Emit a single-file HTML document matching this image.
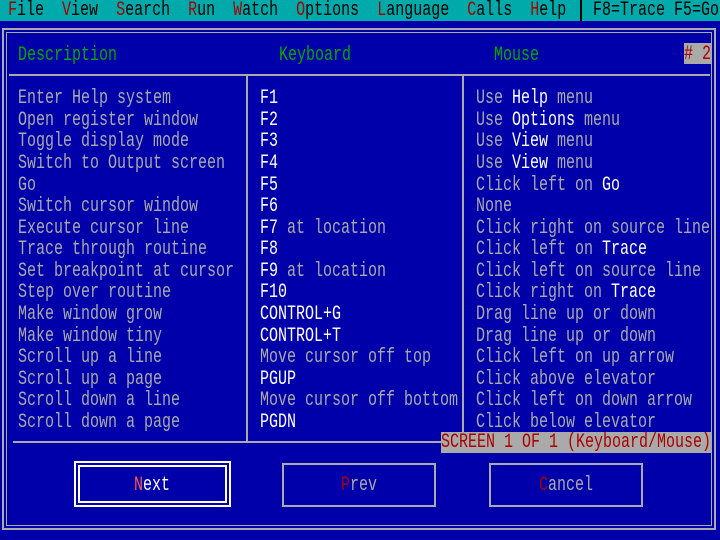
<!DOCTYPE html>
<html><head><meta charset="utf-8"><style>
body{margin:0;width:720px;height:540px;background:#0000aa;overflow:hidden;position:relative;font-family:"Liberation Mono",monospace;font-size:15px;}
.t{position:absolute;height:22px;line-height:22px;white-space:pre;color:#aaa;transform:translateY(2px) scaleY(1.35);transform-origin:50% 50%;}
.k.t{transform:translateY(0) scaleY(1.35);}
.w{color:#fff}.g{color:#00aa00}.r{color:#aa0000}.br{color:#ff5555}.k{color:#000}
.box{position:absolute;box-sizing:border-box}
</style></head><body>
<div class="box" style="left:0;top:0;width:720px;height:21px;background:#00aaaa"></div>
<div class="box" style="left:580px;top:0;width:2px;height:21px;background:#000"></div>
<div class="t k" style="left:8px;top:0"><span class="r">F</span>ile  <span class="r">V</span>iew  <span class="r">S</span>earch  <span class="r">R</span>un  <span class="r">W</span>atch  <span class="r">O</span>ptions  <span class="r">L</span>anguage  <span class="r">C</span>alls  <span class="r">H</span>elp</div>
<div class="t k" style="left:593px;top:0">F8=Trace F5=Go</div>

<div class="box" style="left:2px;top:28px;width:714px;height:502px;border:2px solid #aaa"></div>
<div class="box" style="left:6px;top:32px;width:706px;height:494px;border:1px solid #aaa"></div>
<div class="box" style="left:9px;top:74px;width:701px;height:2px;background:#aaa"></div>
<div class="box" style="left:13px;top:441px;width:430px;height:2px;background:#aaa"></div>
<div class="box" style="left:246px;top:75px;width:2px;height:367px;background:#aaa"></div>
<div class="box" style="left:462px;top:75px;width:2px;height:367px;background:#aaa"></div>

<div class="t g" style="left:18px;top:43px">Description</div>
<div class="t g" style="left:279px;top:43px">Keyboard</div>
<div class="t g" style="left:494px;top:43px">Mouse</div>
<div class="box" style="left:684px;top:43px;width:27px;height:21px;background:#aaa"></div>
<div class="t r" style="left:684px;top:42px"># 2</div>

<div class="t" style="left:18px;top:86px">Enter Help system</div>
<div class="t" style="left:18px;top:108px">Open register window</div>
<div class="t" style="left:18px;top:129px">Toggle display mode</div>
<div class="t" style="left:18px;top:151px">Switch to Output screen</div>
<div class="t" style="left:18px;top:173px">Go</div>
<div class="t" style="left:18px;top:194px">Switch cursor window</div>
<div class="t" style="left:18px;top:216px">Execute cursor line</div>
<div class="t" style="left:18px;top:237px">Trace through routine</div>
<div class="t" style="left:18px;top:259px">Set breakpoint at cursor</div>
<div class="t" style="left:18px;top:280px">Step over routine</div>
<div class="t" style="left:18px;top:302px">Make window grow</div>
<div class="t" style="left:18px;top:324px">Make window tiny</div>
<div class="t" style="left:18px;top:345px">Scroll up a line</div>
<div class="t" style="left:18px;top:367px">Scroll up a page</div>
<div class="t" style="left:18px;top:388px">Scroll down a line</div>
<div class="t" style="left:18px;top:410px">Scroll down a page</div>

<div class="t w" style="left:260px;top:86px">F1</div>
<div class="t w" style="left:260px;top:108px">F2</div>
<div class="t w" style="left:260px;top:129px">F3</div>
<div class="t w" style="left:260px;top:151px">F4</div>
<div class="t w" style="left:260px;top:173px">F5</div>
<div class="t w" style="left:260px;top:194px">F6</div>
<div class="t" style="left:260px;top:216px"><span class="w">F7</span> at location</div>
<div class="t w" style="left:260px;top:237px">F8</div>
<div class="t" style="left:260px;top:259px"><span class="w">F9</span> at location</div>
<div class="t w" style="left:260px;top:280px">F10</div>
<div class="t w" style="left:260px;top:302px">CONTROL+G</div>
<div class="t w" style="left:260px;top:324px">CONTROL+T</div>
<div class="t" style="left:260px;top:345px">Move cursor off top</div>
<div class="t w" style="left:260px;top:367px">PGUP</div>
<div class="t" style="left:260px;top:388px">Move cursor off bottom</div>
<div class="t w" style="left:260px;top:410px">PGDN</div>

<div class="t" style="left:476px;top:86px">Use <span class="w">Help</span> menu</div>
<div class="t" style="left:476px;top:108px">Use <span class="w">Options</span> menu</div>
<div class="t" style="left:476px;top:129px">Use <span class="w">View</span> menu</div>
<div class="t" style="left:476px;top:151px">Use <span class="w">View</span> menu</div>
<div class="t" style="left:476px;top:173px">Click left on <span class="w">Go</span></div>
<div class="t" style="left:476px;top:194px">None</div>
<div class="t" style="left:476px;top:216px">Click right on source line</div>
<div class="t" style="left:476px;top:237px">Click left on <span class="w">Trace</span></div>
<div class="t" style="left:476px;top:259px">Click left on source line</div>
<div class="t" style="left:476px;top:280px">Click right on <span class="w">Trace</span></div>
<div class="t" style="left:476px;top:302px">Drag line up or down</div>
<div class="t" style="left:476px;top:324px">Drag line up or down</div>
<div class="t" style="left:476px;top:345px">Click left on up arrow</div>
<div class="t" style="left:476px;top:367px">Click above elevator</div>
<div class="t" style="left:476px;top:388px">Click left on down arrow</div>
<div class="t" style="left:476px;top:410px">Click below elevator</div>

<div class="box" style="left:441px;top:432px;width:270px;height:21px;background:#aaa"></div>
<div class="t r" style="left:441px;top:430px">SCREEN 1 OF 1 (Keyboard/Mouse)</div>

<div class="box" style="left:74px;top:461px;width:157px;height:46px;border:2px solid #fff"></div>
<div class="box" style="left:78px;top:465px;width:149px;height:38px;border:2px solid #fff"></div>
<div class="t w" style="left:134px;top:473px"><span class="br">N</span>ext</div>
<div class="box" style="left:282px;top:463px;width:154px;height:44px;border:2px solid #aaa"></div>
<div class="t" style="left:341px;top:473px"><span class="r">P</span>rev</div>
<div class="box" style="left:489px;top:463px;width:154px;height:44px;border:2px solid #aaa"></div>
<div class="t" style="left:539px;top:473px"><span class="r">C</span>ancel</div>
</body></html>
